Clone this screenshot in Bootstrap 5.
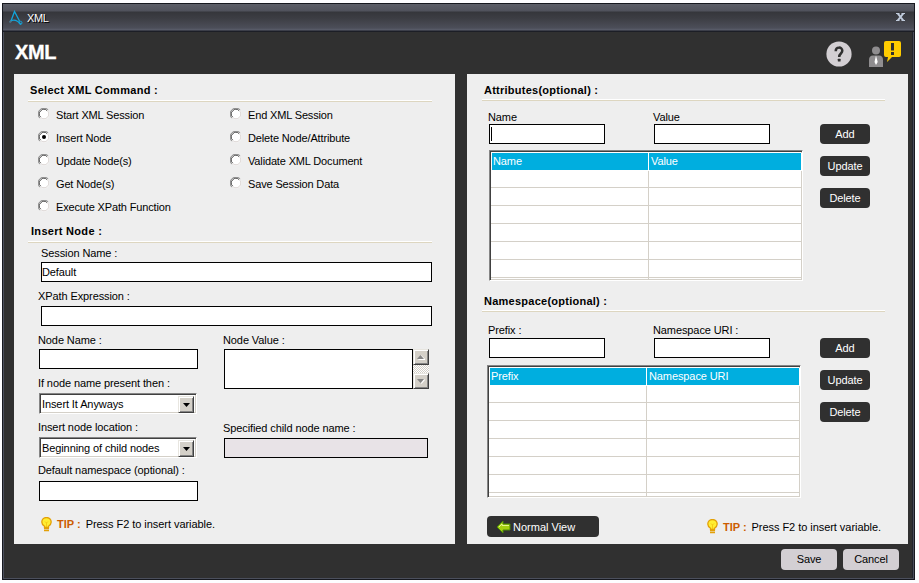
<!DOCTYPE html>
<html lang="en">
<head>
<meta charset="utf-8">
<title>XML</title>
<link href="https://cdn.jsdelivr.net/npm/bootstrap@5.3.0/dist/css/bootstrap.min.css" rel="stylesheet">
<style>
body{background:#fdfdff;font:11px/14px "Liberation Sans",Arial,sans-serif;color:#000;letter-spacing:-.1px;height:583px;overflow:hidden}
.win{width:913px;height:577px;margin:3px 0 0 2px;background:#303030;border:1px solid #16181f;box-shadow:inset 1px 0 #4b4f5c,inset -1px -1px #4b4f5c,inset -2px 0 #20232c}
.titlebar{height:28px;padding:0 9px 0 6px;color:#fff;letter-spacing:-.4px;background:linear-gradient(#5c5e68 0,#50525c 7px,#35363b 8px,#3c3d43 14px,#4c4e59 24px,#5b5e6c 26px,#1c1e26 27px)}
.titlebar span{text-shadow:1px 1px #000}
.closer{margin-bottom:2px}
.head{height:42px;padding:0 13px 0 12px}
.head h1{font-size:20px;line-height:24px;font-weight:700;color:#fff;letter-spacing:-.4px;-webkit-text-stroke:.3px #fff;margin:0 0 2px}
.head svg{margin-top:2px}
.head .user{margin-top:0}
.panes{gap:12px;padding:0 6px 0 11px;height:470px}
.pane{width:441px;background:#eee;flex:none}
.pl{padding:9px 23px 0 14px}
.pr{padding:9px 23px 0 15px}
.sect{font-size:11px;line-height:14px;font-weight:700;letter-spacing:.3px;margin:0 0 3px 2px}
.pr .sect{letter-spacing:.25px}
.rule{height:2px;background:#ddd6c0;border-top:1px solid #fff;opacity:1;margin:0}
.pr .sect{margin-bottom:2px}
.node-h.sect{margin:5px 0 3px 3px}
.radios{display:grid;grid-template-columns:192px 1fr;grid-auto-rows:23px;padding:6px 0 0 10px;height:122px;letter-spacing:-.15px}
.radios label{display:flex;gap:6px;align-items:flex-start}
.radios svg{flex:none}
.box.form-control{height:20px;min-height:0;padding:0;border:1px solid #000;border-radius:0;background:#fff;color:#000;font:inherit;line-height:16px;letter-spacing:inherit;box-shadow:none}
.box.form-control:disabled{background:#e8e3e7}
.box.form-control.caret{background:linear-gradient(#000,#000) 1px 2px/1px 14px no-repeat #fff}
.combo{width:158px;height:21px;background:#fff;border:1px solid;border-color:#858585 #fff #fff #858585;box-shadow:inset 1px 1px #404040,inset -1px -1px #d4d0c8;padding:2px}
.combo .form-select{border:0;border-radius:0;padding:0;font:inherit;line-height:17px;letter-spacing:inherit;background:none;height:17px;min-height:0;color:#000}
.bev{flex:none;width:16px;background:#d4d0c8;border:1px solid;border-color:#e8e6e0 #404040 #404040 #e8e6e0;box-shadow:inset 1px 1px #fff,inset -1px -1px #858585}
.combo .bev{height:17px}
.form-a{padding:3px 0 0 13px}
.lab{display:block;margin-bottom:2px}
.lab3{margin-bottom:3px}
.lab4{margin-bottom:4px}
.gap5{margin-top:5px}
.gap6{margin-top:6px}
.gap7{margin-top:7px}
.out{margin-left:-3px}
.cols{margin:7px 0 0 -2px}
.cols .lab{margin-left:-1px}
.cola{width:185px;flex:none}
.w159{width:159px!important}
.tip b{color:#cc5c00;letter-spacing:0;margin:0 5px}
.tip span{letter-spacing:-.05px}
.memo{height:40px}
.memo .box{height:40px;width:189px;resize:none;overflow:hidden}
.track{width:16px;background:repeating-conic-gradient(#fff 0 25%,#d4d0c8 0 50%) 0 0/2px 2px}
.track .bev{height:16px}
.spec{margin-top:32px}
.spec .box{width:204px}
.inputs{gap:49px}
.inputs .box{width:116px}
.inputs .lab{margin-left:-1px}
.blk{padding:9px 15px 0 7px}
.blk2{padding-top:11px}
.blk2 .inputs .box{margin-top:1px}
.side{width:50px;gap:12px;margin-top:14px}
.blk2 .side{margin-top:15px}
.key.btn{--bs-btn-font-size:11px;padding:0;height:20px;line-height:19px;border:0;border-radius:4px;background:#303030;color:#fff;letter-spacing:-.1px}
.key.btn.lite{background:#d3cfd3;color:#000;width:56px;height:21px;line-height:21px}
.grid-tb{width:314px;border:1px solid;border-color:#858585 #fff #fff #858585;box-shadow:inset 1px 1px #404040,inset -1px -1px #d4d0c8;background:#fff;padding:2px 2px 2px 1px;overflow:hidden}
.grid-tb table{width:311px;table-layout:fixed;border-collapse:separate;border-spacing:0;margin:0}
.grid-tb th{background:#00aedf;color:#fff;font-weight:400;height:18px;padding:1px 0 0 2px;line-height:14px;border-right:1px solid #fff;border-bottom:1px solid #fff;vertical-align:top}
.grid-tb th:first-child{border-left:1px solid #fff;width:158px;padding-left:1px}
.grid-tb td{height:18px;padding:0;border-bottom:1px solid #d4d0c8}
.grid-tb tr:nth-child(1) td{height:17px}
.grid-tb td:first-child{border-right:1px solid #d4d0c8}
.grid-tb tr.stub td{border-bottom:0;height:4px}
.tb1{margin-top:6px;height:131px}
.tb2{margin:7px 0 0 -2px;height:133px}
.ns-h.sect{margin-top:13px}
.low{margin:18px 4px 0 5px}
.low .tip{margin-top:3px}
.low .tip b,.low .tip>span{margin-top:1px}
.nv.key{width:112px;height:21px;padding:1px 0 0 9px}
.nv span{margin-left:2px;letter-spacing:0}
.foot{padding:5px 15px 0;gap:6px}
</style>
<script src="https://cdn.jsdelivr.net/npm/bootstrap@5.3.0/dist/js/bootstrap.bundle.min.js"></script>
</head>
<body>
<svg width="0" height="0" class="position-absolute">
<symbol id="ring" viewBox="0 0 12 12"><circle cx="6" cy="6" r="5.5" fill="#fff"/><path d="M1.8 10.2A5.6 5.6 0 0 1 10.2 1.8" fill="none" stroke="#858585"/><path d="M2.6 9.1A4.6 4.6 0 0 1 9.1 2.6" fill="none" stroke="#404040"/><path d="M2.6 9.4A4.7 4.7 0 0 0 9.4 2.6" fill="none" stroke="#dcd6d4"/></symbol>
<symbol id="bulb" viewBox="0 0 11 15"><path d="M3.5 10.5V9.2C1.5 8 .8 6.7.8 5A4.6 4.4 0 0 1 10.2 5C10.2 6.700 9.500 8 7.500 9.200V10.500Z" fill="#ffee32" stroke="#e3a008" stroke-width="1.3"/><path d="M4 4.500L5.500 6 7 4.500M5.500 6V10" fill="none" stroke="#f0b400" stroke-width=".6"/><path d="M3 11.500H8M3 13.500H8" stroke="#e3a008" stroke-width="1.400"/></symbol>
</svg>
<div class="win">
  <div class="titlebar d-flex align-items-center">
    <svg width="14" height="16" viewBox="0 0 14 16" fill="none"><path d="M.5 12.500L2.500 10.500" stroke="#4d7386" stroke-width="2"/><path d="M2 11L5.500 1.500 10.500 11M3 10.500C6 9.500 9 11 12 14.500" stroke="#12a5dc" stroke-width="1.300"/><circle cx="11.500" cy="12.800" r="1.500" stroke="#12a5dc"/></svg>
    <span class="ms-1">XML</span>
    <svg class="closer ms-auto" width="9" height="8" viewBox="0 0 9 8"><path d="M0 .5H3.500M5.500 .5H9M0 7.500H3.500M5.500 7.500H9" stroke="#c0cbdc"/><path d="M1.700 .5L7.300 7.500M7.300 .5L1.700 7.500" stroke="#c0cbdc" stroke-width="2"/></svg>
  </div>
  <div class="head d-flex align-items-center">
    <h1>XML</h1>
    <svg class="ms-auto" width="26" height="26" viewBox="0 0 26 26"><circle cx="13" cy="13" r="12.600" fill="#d3cfd3"/><path d="M9.700 10.200C9.700 5.500 16.300 5.500 16.300 9.800 16.300 12.700 13.200 12.400 13.200 16" fill="none" stroke="#303030" stroke-width="2.500"/><rect x="11.800" y="17.700" width="2.800" height="2.800" rx=".6" fill="#303030"/></svg>
    <svg class="user ms-3" width="33" height="27" viewBox="0 0 33 27"><circle cx="8" cy="10.500" r="4" fill="#8f8d8f"/><path d="M1 27V20Q1 15.500 5 15.500H11Q15 15.500 15 20V27Z" fill="#8f8d8f"/><path d="M8 15.500L6.500 22 8 25 9.700 22Z" fill="#fff"/><path d="M18 1H31Q33 1 33 3V15Q33 17 31 17H24L19 22 20 17H18Q16 17 16 15V3Q16 1 18 1Z" fill="#fc0"/><path d="M23 3H26V10.500H23ZM23 12H26V15H23Z" fill="#303030"/></svg>
  </div>
  <div class="panes d-flex">
    <section class="pane pl">
      <h2 class="sect">Select XML Command :</h2><hr class="rule">
      <div class="radios">
        <label><svg width="12" height="12"><use href="#ring"/></svg>Start XML Session</label>
        <label><svg width="12" height="12"><use href="#ring"/></svg>End XML Session</label>
        <label><svg width="12" height="12"><use href="#ring"/><circle cx="6" cy="6" r="2" /></svg>Insert Node</label>
        <label><svg width="12" height="12"><use href="#ring"/></svg>Delete Node/Attribute</label>
        <label><svg width="12" height="12"><use href="#ring"/></svg>Update Node(s)</label>
        <label><svg width="12" height="12"><use href="#ring"/></svg>Validate XML Document</label>
        <label><svg width="12" height="12"><use href="#ring"/></svg>Get Node(s)</label>
        <label><svg width="12" height="12"><use href="#ring"/></svg>Save Session Data</label>
        <label><svg width="12" height="12"><use href="#ring"/></svg>Execute XPath Function</label>
      </div>
      <h2 class="sect node-h mt-0">Insert Node :</h2><hr class="rule">
      <div class="form-a">
        <div><label class="lab">Session Name :</label><input class="form-control box" value="Default"></div>
        <div class="gap7"><label class="lab lab3 out">XPath Expression :</label><input class="form-control box"></div>
        <div class="cols d-flex">
          <div class="cola">
            <label class="lab">Node Name :</label><input class="form-control box w159">
            <label class="lab lab3 gap7">If node name present then :</label>
            <div class="combo d-flex"><select class="form-select"><option>Insert It Anyways</option></select><span class="bev d-flex align-items-center justify-content-center"><svg width="7" height="4"><path d="M0 0H7L3.500 4Z"/></svg></span></div>
            <label class="lab lab3 gap6">Insert node location :</label>
            <div class="combo d-flex"><select class="form-select"><option>Beginning of child nodes</option></select><span class="bev d-flex align-items-center justify-content-center"><svg width="7" height="4"><path d="M0 0H7L3.500 4Z"/></svg></span></div>
            <label class="lab lab4 gap5">Default namespace (optional) :</label><input class="form-control box w159">
          </div>
          <div>
            <label class="lab">Node Value :</label>
            <div class="memo d-flex"><textarea class="form-control box"></textarea>
              <div class="track d-flex flex-column justify-content-between"><span class="bev d-flex align-items-center justify-content-center"><svg width="8" height="5"><path d="M4 0L8 4V5H1Z" fill="#fff"/><path d="M0 4H7L3.500 0Z" fill="#858585"/></svg></span><span class="bev d-flex align-items-center justify-content-center"><svg width="8" height="5"><path d="M8 1L4.500 5 4 4 7 0Z" fill="#fff"/><path d="M0 0H7L3.500 4Z" fill="#858585"/></svg></span></div>
            </div>
            <div class="spec"><label class="lab lab3">Specified child node name :</label><input class="form-control box" disabled></div>
          </div>
        </div>
        <div class="tip d-flex mt-3"><svg width="11" height="15"><use href="#bulb"/></svg><b>TIP :</b><span>Press F2 to insert variable.</span></div>
      </div>
    </section>
    <section class="pane pr">
      <h2 class="sect">Attributes(optional) :</h2><hr class="rule">
      <div class="d-flex justify-content-between blk">
        <div>
          <div class="inputs d-flex"><div><label class="lab mb-0">Name</label><input class="form-control box caret"></div><div><label class="lab mb-0">Value</label><input class="form-control box"></div></div>
          <div class="grid-tb tb1"><table><thead><tr><th>Name</th><th>Value</th></tr></thead><tbody><tr><td></td><td></td></tr><tr><td></td><td></td></tr><tr><td></td><td></td></tr><tr><td></td><td></td></tr><tr><td></td><td></td></tr><tr><td></td><td></td></tr><tr class="stub"><td></td><td></td></tr></tbody></table></div>
        </div>
        <div class="side d-flex flex-column"><button class="btn key">Add</button><button class="btn key">Update</button><button class="btn key">Delete</button></div>
      </div>
      <h2 class="sect ns-h">Namespace(optional) :</h2><hr class="rule">
      <div class="d-flex justify-content-between blk blk2">
        <div>
          <div class="inputs d-flex"><div><label class="lab mb-0">Prefix :</label><input class="form-control box"></div><div><label class="lab mb-0">Namespace URI :</label><input class="form-control box"></div></div>
          <div class="grid-tb tb2"><table><thead><tr><th>Prefix</th><th>Namespace URI</th></tr></thead><tbody><tr><td></td><td></td></tr><tr><td></td><td></td></tr><tr><td></td><td></td></tr><tr><td></td><td></td></tr><tr><td></td><td></td></tr><tr><td></td><td></td></tr><tr class="stub"><td></td><td></td></tr></tbody></table></div>
        </div>
        <div class="side d-flex flex-column"><button class="btn key">Add</button><button class="btn key">Update</button><button class="btn key">Delete</button></div>
      </div>
      <div class="d-flex justify-content-between low">
        <button class="btn key nv d-flex align-items-center"><svg width="15" height="14" viewBox="0 0 15 14"><path d="M1 7L7 1V4H14V10H7V13Z" fill="#a4d010" stroke="#4c8a08"/><path d="M3 7L6 4V5.500H13" fill="none" stroke="#e4f58a"/></svg><span>Normal View</span></button>
        <div class="tip d-flex"><svg width="11" height="15"><use href="#bulb"/></svg><b>TIP :</b><span>Press F2 to insert variable.</span></div>
      </div>
    </section>
  </div>
  <div class="foot d-flex justify-content-end"><button class="btn key lite">Save</button><button class="btn key lite">Cancel</button></div>
</div>
</body>
</html>
